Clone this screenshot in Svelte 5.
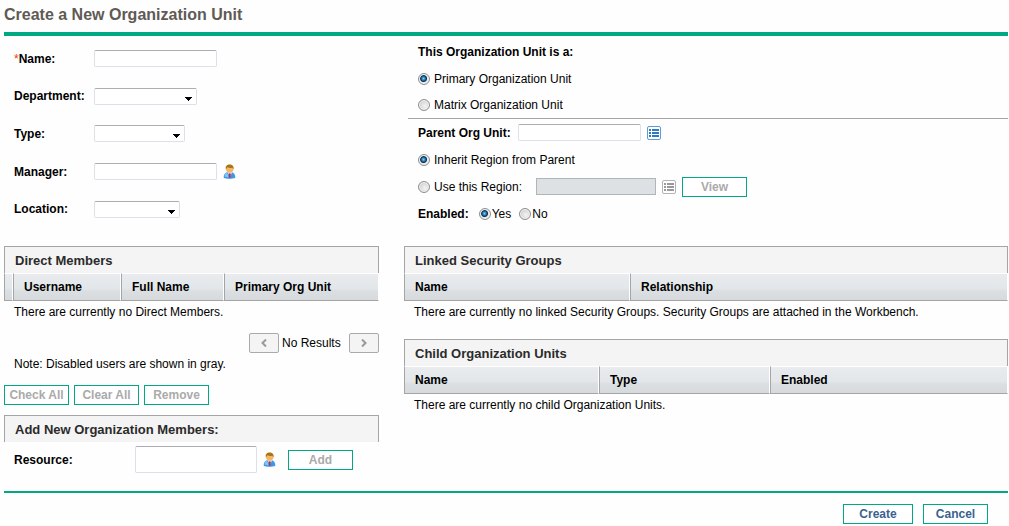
<script>
	let name = '';
	let manager = '';
	let parentUnit = '';
	let resource = '';
	let unitKind = 'primary';
	let region = 'inherit';
	let enabled = 'yes';

	const groupColumns = ['Name', 'Relationship'];
	const childColumns = ['Name', 'Type', 'Enabled'];
</script>

{#snippet personIcon()}
	<svg viewBox="0 0 13 15" width="13" height="15" aria-hidden="true">
		<path d="M.8 14C.4 11 1.500 9.300 3.800 8.200h5.400c2.300 1.100 3.400 2.800 3 5.800-3 .9-8.400.9-11.400 0z" fill="#3f97e8" />
		<path d="M1.600 12.500c0-2 .8-3 2.600-3.700l1.300 4.400z" fill="#86c5fa" />
		<path d="M4.400 8h4.800l-2 4.500z" fill="#dcecfa" />
		<path d="M6.800 9l1 1-.4 3.800H6.200L6 10z" fill="#c4232b" />
		<circle cx="6.700" cy="5" r="3.700" fill="#f5b766" />
		<path d="M2.900 5.500C2 2.200 4 .5 6.600.5s4.600 1.600 3.900 5L9.300 3.700C7.300 4.200 5.500 3.900 4.300 3.200z" fill="#a97514" />
	</svg>
{/snippet}

{#snippet listIcon()}
	<svg viewBox="0 0 14 14" width="14" height="14" aria-hidden="true">
		<rect x="0.500" y="0.500" width="13" height="13" rx="1.500" fill="#fff" stroke="currentColor" stroke-opacity="0.75" />
		<path d="M2 3h2v2H2zM5 3h7v2H5zM2 6h2v2H2zM5 6h7v2H5zM2 9h2v2H2zM5 9h7v2H5z" fill="currentColor" />
	</svg>
{/snippet}

<main>
	<h1>Create a New Organization Unit</h1>

	<div class="columns">
		<div class="col">
			<div class="fields">
				<div class="row">
					<label for="name"><span class="req">*</span>Name:</label>
					<input id="name" class="text" type="text" bind:value={name} />
				</div>
				<div class="row">
					<label for="department">Department:</label>
					<select id="department" class="department"><option></option></select>
				</div>
				<div class="row">
					<label for="type">Type:</label>
					<select id="type" class="type"><option></option></select>
				</div>
				<div class="row">
					<label for="manager">Manager:</label>
					<input id="manager" class="text" type="text" bind:value={manager} />
					<button class="icon" aria-label="Choose manager">{@render personIcon()}</button>
				</div>
				<div class="row">
					<label for="location">Location:</label>
					<select id="location" class="location"><option></option></select>
				</div>
			</div>

			<section>
				<h2>Direct Members</h2>
				<table class="members">
					<thead>
						<tr><th></th><th>Username</th><th>Full Name</th><th>Primary Org Unit</th></tr>
					</thead>
					<tbody>
						<tr><td colspan="4">There are currently no Direct Members.</td></tr>
					</tbody>
				</table>
			</section>
			<div class="pager">
				<button class="page" disabled aria-label="Previous page">
					<svg viewBox="0 0 6 8" width="6" height="8"><path d="M5 0.500 1.500 4 5 7.500" /></svg>
				</button>
				<span>No Results</span>
				<button class="page" disabled aria-label="Next page">
					<svg viewBox="0 0 6 8" width="6" height="8"><path d="M1 0.500 4.500 4 1 7.500" /></svg>
				</button>
			</div>
			<p class="note">Note: Disabled users are shown in gray.</p>
			<div class="actions">
				<button class="btn" disabled>Check All</button>
				<button class="btn" disabled>Clear All</button>
				<button class="btn" disabled>Remove</button>
			</div>

			<section>
				<h2>Add New Organization Members:</h2>
				<div class="resource">
					<label for="resource">Resource:</label>
					<input id="resource" class="text tall" type="text" bind:value={resource} />
					<button class="icon" aria-label="Choose resource">{@render personIcon()}</button>
					<button class="btn" disabled>Add</button>
				</div>
			</section>
		</div>

		<div class="col">
			<div class="options">
				<div class="kind" role="radiogroup" aria-labelledby="kind-title">
					<div class="line"><b id="kind-title">This Organization Unit is a:</b></div>
					<label class="line choice"><input type="radio" value="primary" bind:group={unitKind} />Primary Organization Unit</label>
					<label class="line choice"><input type="radio" value="matrix" bind:group={unitKind} />Matrix Organization Unit</label>
				</div>
				<div class="parent">
					<div class="line">
						<label class="parent-label" for="parent">Parent Org Unit:</label>
						<input id="parent" class="text" type="text" bind:value={parentUnit} />
						<button class="icon list" aria-label="Choose parent unit">{@render listIcon()}</button>
					</div>
					<label class="line choice"><input type="radio" value="inherit" bind:group={region} />Inherit Region from Parent</label>
					<div class="line">
						<label class="choice region-label"><input type="radio" value="own" bind:group={region} />Use this Region:</label>
						<input class="text region" type="text" aria-label="Region" disabled={region === 'inherit'} />
						<button class="icon list" disabled={region === 'inherit'} aria-label="Choose region">{@render listIcon()}</button>
						<button class="btn view" disabled={region === 'inherit'}>View</button>
					</div>
					<div class="line enabled" role="radiogroup" aria-labelledby="enabled-title">
						<b id="enabled-title">Enabled:</b>
						<label><input type="radio" value="yes" bind:group={enabled} />Yes</label>
						<label><input type="radio" value="no" bind:group={enabled} />No</label>
					</div>
				</div>
			</div>

			<section>
				<h2>Linked Security Groups</h2>
				<table class="groups">
					<thead>
						<tr>{#each groupColumns as column}<th>{column}</th>{/each}</tr>
					</thead>
					<tbody>
						<tr><td colspan="2">There are currently no linked Security Groups. Security Groups are attached in the Workbench.</td></tr>
					</tbody>
				</table>
			</section>
			<section class="children">
				<h2>Child Organization Units</h2>
				<table class="units">
					<thead>
						<tr>{#each childColumns as column}<th>{column}</th>{/each}</tr>
					</thead>
					<tbody>
						<tr><td colspan="3">There are currently no child Organization Units.</td></tr>
					</tbody>
				</table>
			</section>
		</div>
	</div>

	<footer>
		<button class="btn create">Create</button>
		<button class="btn">Cancel</button>
	</footer>
</main>

<style>
	:global(body) {
		background: #fefefe;
	}
	main,
	main * {
		box-sizing: border-box;
	}
	main {
		--green: #01a982;
		--line: #a5a5a5;
		padding: 0 1px 0 4px;
		font: 12px/14px 'Liberation Sans', Arial, sans-serif;
		color: #000;
	}
	h1 {
		margin: 0;
		padding: 6px 0 8px;
		border-bottom: 4px solid var(--green);
		font-size: 16px;
		line-height: 18px;
		color: #5f5a56;
	}
	.columns {
		display: grid;
		grid-template-columns: 375fr 604fr;
		gap: 25px;
	}

	/* left form */
	.fields {
		display: grid;
		grid-template-rows: repeat(5, 1fr);
		height: 210px;
		padding: 4px 0 18px 10px;
	}
	.row {
		display: flex;
		align-items: center;
	}
	.row > label {
		width: 80px;
		white-space: nowrap;
		font-weight: bold;
	}
	.req {
		font-weight: normal;
		color: #f30;
	}
	.text,
	select {
		margin: 0;
		height: 17px;
		padding: 0 3px;
		border: 1px solid #dfe0e7;
		border-top-color: #abadb3;
		border-radius: 2px;
		background-color: #fff;
		font: inherit;
	}
	.text {
		width: 123px;
	}
	select {
		appearance: none;
		/* down arrow, stacked from four rows */
		background-image: linear-gradient(#000, #000), linear-gradient(#000, #000), linear-gradient(#000, #000), linear-gradient(#000, #000);
		background-repeat: no-repeat;
		background-size: 7px 1px, 5px 1px, 3px 1px, 1px 1px;
		background-position: right 4px top 8px, right 5px top 9px, right 6px top 10px, right 7px top 11px;
	}
	.department {
		width: 103px;
	}
	.type {
		width: 91px;
	}
	.location {
		width: 86px;
	}
	.icon {
		display: flex;
		margin-left: 6px;
		padding: 0;
		border: 0;
		background: none;
	}
	.icon.list {
		color: #2b7bc4;
	}
	.icon.list:disabled {
		color: #999;
	}

	/* panels */
	h2 {
		margin: 0;
		height: 27px;
		padding: 5px 10px;
		border: 1px solid var(--line);
		border-bottom: 0;
		background: #f4f4f4;
		font-size: 13px;
		line-height: 18px;
		color: #2b2b2b;
	}
	table {
		width: 100%;
		table-layout: fixed;
		border-spacing: 0;
	}
	th {
		height: 28px;
		padding: 0 10px;
		border: 1px solid #fff;
		border-left-color: var(--line);
		border-bottom-color: var(--line);
		background: linear-gradient(#e9ebee, #e3e7ea 55%, #dbdfe2 65%, #d6dadd) padding-box;
		text-align: left;
	}
	td {
		padding: 4px 10px;
	}
	.members th:nth-child(1) {
		width: 9px;
		padding: 0;
	}
	.members th:nth-child(2) {
		width: 108px;
	}
	.members th:nth-child(3) {
		width: 103px;
	}
	.groups th:first-child {
		width: 226px;
	}
	.units th:nth-child(1) {
		width: 195px;
	}
	.units th:nth-child(2) {
		width: 171px;
	}
	.children {
		margin-top: 16px;
	}

	.pager {
		display: flex;
		align-items: center;
		justify-content: flex-end;
		margin-top: 10px;
	}
	.pager span {
		width: 70px;
		padding-left: 3px;
	}
	.page {
		display: grid;
		place-items: center;
		width: 30px;
		height: 20px;
		padding: 0;
		border: 1px solid #aaa;
		border-radius: 2px;
		background: #f4f4f4;
	}
	.page path {
		fill: none;
		stroke: #999;
		stroke-width: 2;
	}
	.note {
		margin: 4px 10px 14px;
	}
	.actions {
		display: flex;
		gap: 5px;
		margin-bottom: 10px;
	}
	.btn {
		width: 65px;
		height: 20px;
		padding: 0;
		border: 1px solid var(--green);
		background: #fff;
		font: bold 12px/14px 'Liberation Sans', Arial, sans-serif;
		white-space: nowrap;
		color: #3a6291;
	}
	.btn:disabled {
		color: #aaa;
	}
	.resource {
		display: flex;
		align-items: center;
		padding: 4px 0 4px 10px;
	}
	.resource label {
		width: 121px;
		font-weight: bold;
	}
	.resource .btn {
		margin-left: 12px;
	}
	.text.tall {
		width: 122px;
		height: 27px;
	}

	/* right form */
	.options {
		height: 210px;
		padding: 2px 0 0 4px;
	}
	.kind {
		border-bottom: 1px solid var(--line);
	}
	.kind .line:last-child {
		height: 26px;
	}
	.line {
		display: flex;
		align-items: center;
		height: 27px;
		padding-left: 10px;
	}
	.parent-label {
		width: 100px;
		font-weight: bold;
	}
	.choice {
		gap: 4px;
	}
	.region-label {
		display: flex;
		align-items: center;
		width: 118px;
	}
	.text.region {
		width: 120px;
	}
	.text:disabled {
		border-color: #b0b5ba;
		border-radius: 0;
		background: #dde1e4;
	}
	.view {
		margin-left: 6px;
	}
	input[type='radio'] {
		appearance: none;
		flex: none;
		width: 12px;
		height: 12px;
		margin: 0;
		border: 1px solid #8e8f8f;
		border-radius: 50%;
		background: radial-gradient(circle at 60% 60%, #f4f4f4, #cfd1d3 6px);
		box-shadow: inset 0 0 0 1px #f4f4f4;
	}
	input[type='radio']:checked {
		background: radial-gradient(circle at 45% 45%, #7fd0f0 0, #1c6ea4 2px, #0c2c4c 3px, #e4e6e8 4px);
	}
	.enabled {
		gap: 8px;
	}
	.enabled label {
		display: flex;
		align-items: center;
		gap: 1px;
	}
	.enabled b {
		margin-right: 2px;
	}

	footer {
		display: flex;
		justify-content: flex-end;
		gap: 10px;
		margin-top: 14px;
		padding: 11px 20px 2px 0;
		border-top: 2px solid var(--green);
	}
	.create {
		width: 70px;
	}
</style>
